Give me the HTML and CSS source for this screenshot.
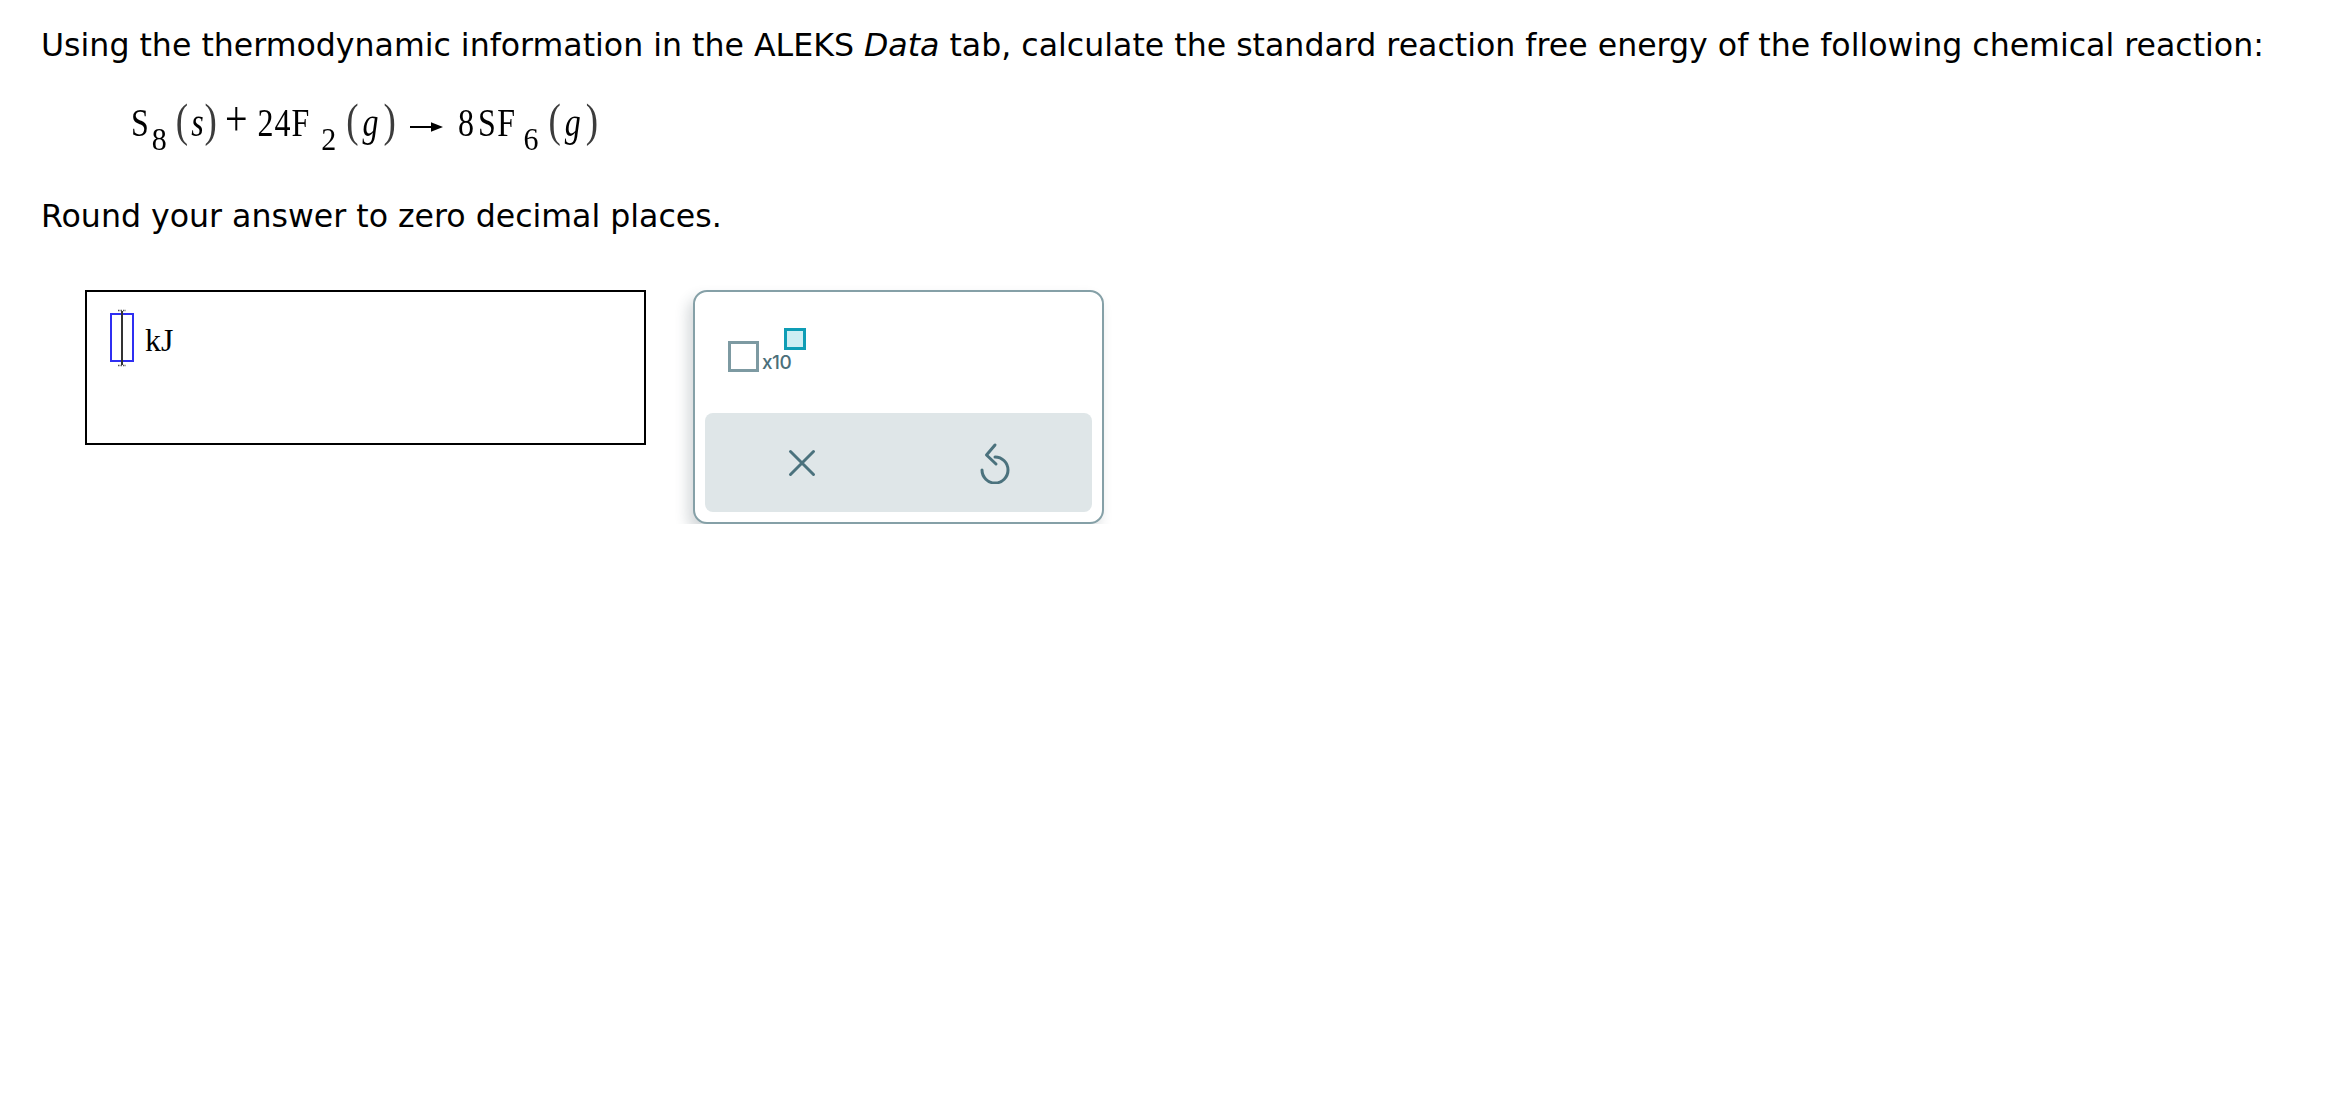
FILE: index.html
```html
<!DOCTYPE html>
<html lang="en">
<head>
<meta charset="utf-8">
<title>ALEKS question</title>
<link rel="stylesheet" href="styles.css">
</head>
<body>
<main class="page">
  <p class="prompt">Using the thermodynamic information in the ALEKS <i>Data</i> tab, calculate the standard reaction free energy of the following chemical reaction:</p>
  <div class="equation">
    <span class="el">S</span><span class="sub s8">8</span><span class="par p1">(</span><span class="st ss">s</span><span class="par">)</span><span class="op">+</span><span class="el e2">24F</span><span class="sub s2">2</span><span class="par p2">(</span><span class="st sg">g</span><span class="par">)</span><svg class="arrow" width="33" height="12" viewBox="0 0 33 12" aria-label="yields"><path d="M0 6H24" stroke="#000" stroke-width="1.6"/><path d="M21 2.2L33 6L21 9.8Z" fill="#000"/></svg><span class="el e3">8</span><span class="el e4">SF</span><span class="sub s6">6</span><span class="par p3">(</span><span class="st sg">g</span><span class="par">)</span>
  </div>
  <p class="prompt round">Round your answer to zero decimal places.</p>
  <div class="answer-row">
    <div class="answer-box">
      <svg class="cursor" width="24" height="58" viewBox="0 0 24 58" aria-hidden="true">
        <rect x="1" y="5" width="22" height="47" fill="none" stroke="#2f2ff2" stroke-width="2"/>
        <line x1="12" y1="2" x2="12" y2="56" stroke="#333" stroke-width="2"/>
        <path d="M8 1.5h8M8 56.5h8" stroke="#555" stroke-width="1.5" stroke-dasharray="1.5 1"/>
      </svg>
      <span class="unit">kJ</span>
    </div>
    <div class="palette">
      <div class="palette-top">
        <button class="sci-btn" type="button" aria-label="scientific notation">
          <span class="sq-base"></span><span class="x10">x10</span><span class="sq-exp"></span>
        </button>
      </div>
      <div class="palette-bar">
        <button class="bar-btn" type="button" aria-label="clear">
          <svg width="28" height="28" viewBox="0 0 28 28"><path d="M2.5 2.5L25.5 25.5M25.5 2.5L2.5 25.5" stroke="#4b727d" stroke-width="3" stroke-linecap="round"/></svg>
        </button>
        <button class="bar-btn" type="button" aria-label="undo">
          <svg width="32" height="42" viewBox="0 0 32 42"><path d="M16 15A13 13 0 1 1 3 28" fill="none" stroke="#4b727d" stroke-width="3" stroke-linecap="round"/><path d="M16 3L7.5 13L17 22" fill="none" stroke="#4b727d" stroke-width="3" stroke-linecap="round" stroke-linejoin="round"/></svg>
        </button>
      </div>
    </div>
  </div>
</main>
</body>
</html>
```
FILE: styles.css
```css
html, body {
  margin: 0;
  padding: 0;
  background: #ffffff;
}
.page {
  padding: 23px 0 0 41px;
  font-family: "DejaVu Sans", Verdana, sans-serif;
  color: #000;
}
.prompt {
  margin: 0;
  font-size: 31.6px;
  line-height: 44px;
  white-space: nowrap;
}
.equation {
  margin: 34.5px 0 0 90px;
  height: 40px;
  line-height: 40px;
  font-family: "Liberation Serif", "Times New Roman", serif;
  font-size: 32px;
  white-space: nowrap;
  transform: scaleY(1.25);
  transform-origin: 0 20px;
}
.equation span {
  display: inline-block;
  line-height: 0;
}
.sub {
  font-size: 30px;
  vertical-align: -13px;
  margin-left: 3px;
  transform: scaleY(0.85);
}
.par {
  color: #3c3c3c;
  font-size: 37px;
}
.st {
  font-style: italic;
}
.ss { margin: 0 1px 0 3px; }
.sg { margin: 0 5px 0 4px; }
.p1 { margin-left: 9px; }
.op {
  font-size: 40px;
  margin-left: 8px;
}
.e2 {
  margin-left: 10px;
  letter-spacing: 1px;
}
.s2 { margin-left: 11px; }
.p2 { margin-left: 10px; }
.arrow {
  vertical-align: 1px;
  margin-left: 14px;
}
.e3 { margin-left: 15px; }
.e4 {
  margin-left: 4px;
  letter-spacing: 1.5px;
}
.s6 { margin-left: 7px; }
.p3 { margin-left: 10px; }
.round {
  margin-top: 52.5px;
}
.answer-row {
  display: flex;
  align-items: flex-start;
  gap: 47px;
  margin: 52px 0 0 44px;
}
.answer-box {
  box-sizing: border-box;
  width: 561px;
  height: 155px;
  border: 2px solid #000;
  display: flex;
  align-items: flex-start;
  padding: 17px 0 0 23px;
}
.cursor {
  display: block;
}
.unit {
  font-family: "Liberation Serif", "Times New Roman", serif;
  font-size: 32px;
  line-height: 36px;
  margin: 13px 0 0 11px;
}
.palette {
  box-sizing: border-box;
  width: 411px;
  height: 234px;
  border: 2px solid #85a0a7;
  border-radius: 14px;
  background: #fff;
  box-shadow: -5px 8px 14px rgba(40, 60, 70, 0.2);
  display: flex;
  flex-direction: column;
}
.palette-top {
  flex: 1;
  padding: 36px 0 0 33px;
}
.sci-btn {
  display: flex;
  align-items: flex-start;
  padding: 0;
  border: 0;
  background: none;
  font-family: "Inter", "Open Sans", sans-serif;
}
.sq-base {
  box-sizing: border-box;
  width: 31px;
  height: 31px;
  margin-top: 13px;
  border: 3px solid #7d9aa2;
  background: #fff;
}
.x10 {
  font-size: 19px;
  line-height: 19px;
  font-weight: 500;
  color: #4b6f7a;
  margin: 25px 0 0 3px;
  letter-spacing: -0.5px;
}
.sq-exp {
  box-sizing: border-box;
  width: 22px;
  height: 22px;
  margin-left: -7px;
  border: 3px solid #0e9db5;
  background: #cdeef3;
}
.palette-bar {
  height: 99px;
  margin: 0 10px 10px;
  border-radius: 8px;
  background: #dfe6e8;
  display: grid;
  grid-template-columns: 1fr 1fr;
}
.bar-btn {
  border: 0;
  background: none;
  padding: 0;
  display: flex;
  align-items: center;
  justify-content: center;
}
.bar-btn svg {
  display: block;
}
```
